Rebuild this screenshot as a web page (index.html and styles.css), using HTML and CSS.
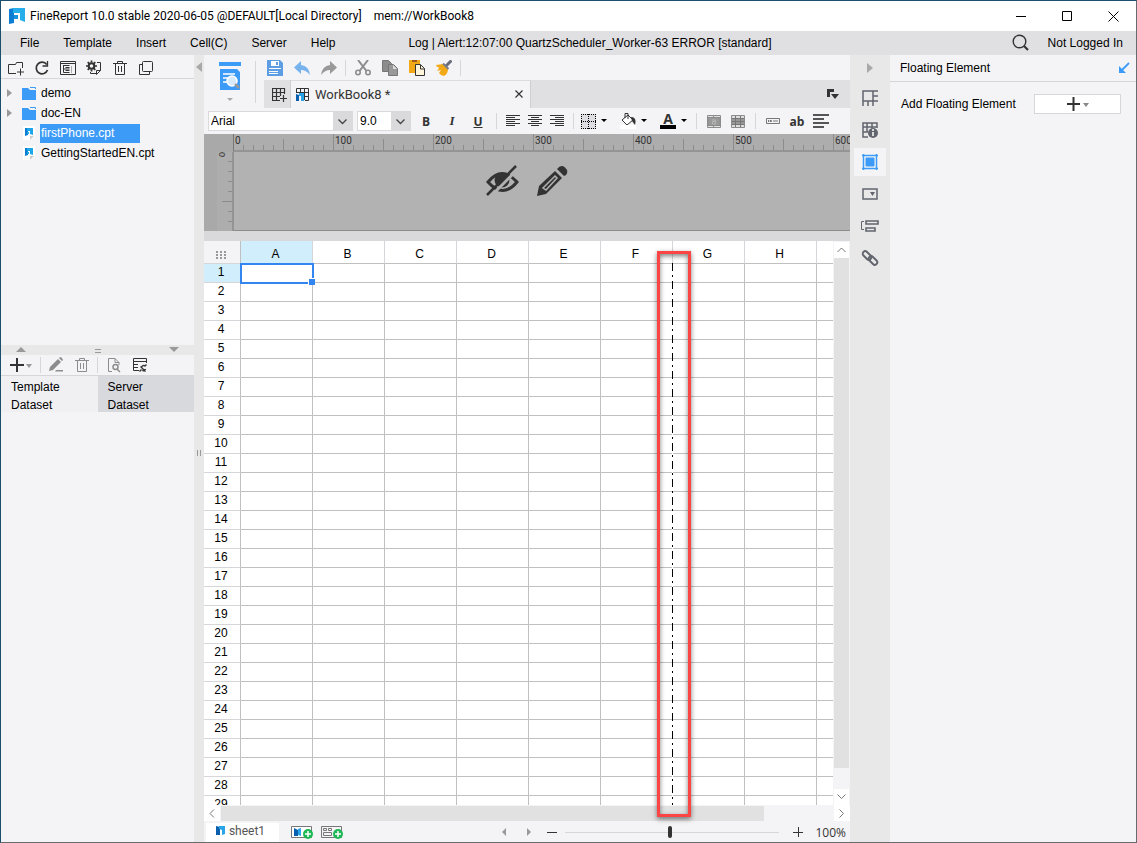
FILE: index.html
```
<!DOCTYPE html>
<html lang="en">
<head>
    <meta charset="UTF-8">
    <meta name="viewport" content="width=device-width, initial-scale=1.0">
    <title>FineReport 10.0</title>
    <link rel="stylesheet" href="styles.css">
</head>
<body>
    <header class="titlebar">
        <svg class="logo" width="16" height="18" viewBox="0 0 16 18">
            <path fill="#0a7ed3" d="M0 2l5-1v15l-5 1z"/>
            <path fill="#25aeea" d="M4 1h12v5H4z"/>
            <path fill="#1593dc" d="M5 8h4v4H5z"/>
            <path fill="#25aeea" d="M11 5h5v10l-5-2z"/>
        </svg>
        <h1>FineReport 10.0 stable 2020-06-05 @DEFAULT[Local Directory]</h1>
        <span class="doc-path">mem://WorkBook8</span>
        <div class="window-buttons">
            <button aria-label="Minimize"><svg width="11" height="11"><path d="M0 5.500h10" stroke="#000"/></svg></button>
            <button aria-label="Maximize"><svg width="11" height="11"><path d="M.5 .5h9v9h-9z" fill="none" stroke="#000"/></svg></button>
            <button aria-label="Close"><svg width="11" height="11"><path d="M.5 .5l10 10M10.500 .5l-10 10" stroke="#000"/></svg></button>
        </div>
    </header>

    <nav class="menubar">
        <button>File</button>
        <button>Template</button>
        <button>Insert</button>
        <button>Cell(C)</button>
        <button>Server</button>
        <button>Help</button>
        <span class="log">Log | Alert:12:07:00 QuartzScheduler_Worker-63 ERROR [standard]</span>
        <button class="search" aria-label="Search"><svg width="18" height="18" fill="none" stroke="#333"><circle cx="7.500" cy="7.500" r="6.300" stroke-width="1.400"/><path d="M12 12l4 4" stroke-width="2.200"/></svg></button>
        <a class="login" href="#">Not Logged In</a>
    </nav>

    <div class="workspace">
        <!-- files and datasets -->
        <aside class="left-panel">
            <div class="file-tools">
                <button aria-label="New folder"><svg width="16" height="16" fill="none" stroke="#333"><path d="M14.500 8V2.500H8.500L7.500 4.500H.5v9H8M12.500 8.500v7M9 12h7"/></svg></button>
                <button aria-label="Refresh"><svg width="16" height="16" fill="none" stroke="#333"><path d="M12.700 4.500A5.800 5.800 0 1 0 13.500 10" stroke-width="1.700"/><path d="M13.500 1v5h-5" stroke-width="1.300"/></svg></button>
                <button aria-label="Show in explorer"><svg width="16" height="16" fill="none" stroke="#333"><path d="M.5 1.500h15v13H.5zM.5 3.500h15M3.500 5v7.500h6M3.500 5.500h6M3.500 9h6M5.500 7.500h4M5.500 10.500h4"/><path d="M11.500 6v7" stroke="#aaa"/></svg></button>
                <button aria-label="Rename"><svg width="16" height="16" fill="none" stroke="#333"><circle cx="5.500" cy="6" r="2.800" stroke-width="2"/><path d="M5.500 .5v2M5.500 9.500v2M0 6h2M9 6h2M1.700 2.200l1.500 1.500M9.300 2.200L7.800 3.700M1.700 9.800l1.500-1.500M9.300 9.800L7.800 8.300" stroke-width="1.700"/><path d="M11 2.500h3.500v8M4.500 12v1.500h6M10.500 10.500h4l-4 4z"/></svg></button>
                <button aria-label="Delete"><svg width="16" height="16" fill="none" stroke="#333"><path d="M1 3.500h14M5.500 3V1.500h5V3M3.500 4v10.500h9V4M6.500 6v6M9.500 6v6"/></svg></button>
                <button aria-label="Copy"><svg width="16" height="16" fill="none" stroke="#333"><rect x="4.500" y="1.500" width="10" height="10" rx="1"/><path d="M4 4.500H1.500v10h10V12"/></svg></button>
            </div>
            <ul class="tree">
                <li><button class="folder"><svg class="twist" width="6" height="10"><path d="M0 1l5 4-5 4z" fill="#999"/></svg><svg width="15" height="13"><path fill="#3d9bf8" d="M0 1h6l2 2h6v10H0z"/><path d="M8 .5h5.500v1.500" fill="none" stroke="#3d9bf8"/></svg><span>demo</span></button></li>
                <li><button class="folder"><svg class="twist" width="6" height="10"><path d="M0 1l5 4-5 4z" fill="#999"/></svg><svg width="15" height="13"><path fill="#3d9bf8" d="M0 1h6l2 2h6v10H0z"/><path d="M8 .5h5.500v1.500" fill="none" stroke="#3d9bf8"/></svg><span>doc-EN</span></button></li>
                <li><button class="file selected"><svg width="15" height="14"><path fill="#fff" d="M1 0h12v10l-4 4H1z"/><path d="M8 14v-4h4z" fill="#ccc"/><path fill="#0a7ed3" d="M3 2h3v7l-3 1z"/><path fill="#1fa6e8" d="M5 2h6v3H5zM8 4h3v5l-3-1zM5 6h2v2H5z"/></svg><span>firstPhone.cpt</span></button></li>
                <li><button class="file"><svg width="15" height="14"><path fill="#fff" d="M1 0h12v10l-4 4H1z"/><path d="M8 14v-4h4z" fill="#ccc"/><path fill="#0a7ed3" d="M3 2h3v7l-3 1z"/><path fill="#1fa6e8" d="M5 2h6v3H5zM8 4h3v5l-3-1zM5 6h2v2H5z"/></svg><span>GettingStartedEN.cpt</span></button></li>
            </ul>
            <div class="h-splitter">
                <svg width="10" height="6"><path d="M0 5h10L5 0z" fill="#999"/></svg>
                <svg width="6" height="5"><path d="M0 1.500h6M0 4.500h6" stroke="#999"/></svg>
                <svg width="10" height="6"><path d="M0 0h10L5 5z" fill="#999"/></svg>
            </div>
            <div class="data-tools">
                <button class="add" aria-label="Add dataset"><svg width="22" height="14"><path d="M0 7h14M7 0v14" stroke="#333" stroke-width="2"/><path d="M16 6h6l-3 4z" fill="#999"/></svg></button>
                <i class="sep"></i>
                <button aria-label="Edit"><svg width="16" height="16"><path fill="#8c8c8c" d="M1 14l1-4 8-8 3 3-8 8zM11 1l1-1q2 0 3 3l-1 1zM8 13h7v1.500H7z"/></svg></button>
                <button aria-label="Remove"><svg width="16" height="16" fill="none" stroke="#8c8c8c"><path d="M1 3.500h14M5.500 3V1.500h5V3M3.500 4v10.500h9V4M6.500 6v6M9.500 6v6"/></svg></button>
                <i class="sep"></i>
                <button aria-label="Preview"><svg width="16" height="16" fill="none" stroke="#8c8c8c"><path d="M6 14.500H2.500v-13H9l4 4V8M9 1.500v4h4"/><circle cx="9.500" cy="10" r="2.500" stroke-width="1.500"/><path d="M11 12l3 3" stroke-width="1.500"/></svg></button>
                <button aria-label="Connection"><svg width="16" height="16" fill="none" stroke="#333"><path d="M14.500 6V1.500h-13v12H7M1 4.500h14M2 7.500h4M2 10.500h4"/><path d="M7.500 14.500l2-2M12.500 9.500l2-2M8.500 9.500l5 5M9.500 10.500q1-3 4-1.500M10 13.500q3 1 3.500-1.500" stroke-width="1.300"/></svg></button>
            </div>
            <div class="data-tabs">
                <button>Template Dataset</button>
                <button class="active">Server Dataset</button>
            </div>
        </aside>
        <div class="v-splitter">
            <svg width="6" height="10"><path d="M6 0v10L0 5z" fill="#a8a8a8"/></svg>
            <svg class="grip" width="4" height="6"><path d="M.5 0v6M3.500 0v6" stroke="#999"/></svg>
        </div>

        <!-- report designer -->
        <main class="designer">
            <div class="top-tools">
                <button class="preview" aria-label="Preview">
                    <svg width="22" height="40"><path fill="#3d9bf8" d="M0 0h22v4H0zM1 7h17l3 3v18H1z"/><path d="M4 12h12M4 16h6M4 20h4" stroke="#fff" stroke-width="1.500"/><circle cx="13" cy="19" r="5" fill="#d8ebfc" stroke="#fff" stroke-width="1.500"/><path d="M16 22l4 4" stroke="#999" stroke-width="2.500"/><path d="M8 36h6l-3 3z" fill="#aaa"/></svg>
                </button>
                <i class="sep tall"></i>
                <div class="top-rows">
                    <div class="quick-tools">
                        <button aria-label="Save"><svg width="16" height="16"><path fill="#5c9de3" d="M0 0h13l3 3v13H0z"/><path fill="#fff" d="M4 1h8v5H4zM2 8h12v1H2zM2 11h9v1H2zM2 13h9v1H2z"/><path fill="#5c9de3" d="M9 2h2v3H9z"/></svg></button>
                        <button aria-label="Undo"><svg width="16" height="16"><path fill="#79b3ee" d="M7 1v4q8 1 9 10-4-5-9-5v4L0 7.500z"/></svg></button>
                        <button aria-label="Redo"><svg width="16" height="16"><path fill="#999" d="M9 1v4Q1 6 0 15q4-5 9-5v4l7-6.500z"/></svg></button>
                        <i class="sep"></i>
                        <button aria-label="Cut"><svg width="16" height="16" fill="none" stroke="#8c8c8c"><circle cx="3" cy="12.500" r="2.200" stroke-width="1.600"/><circle cx="13" cy="12.500" r="2.200" stroke-width="1.600"/><path d="M3 0l8.500 11M13 0L4.500 11" stroke-width="2"/></svg></button>
                        <button aria-label="Copy"><svg width="16" height="16"><path fill="#8c8c8c" stroke="#777" d="M.5 .5h6l3 3v8h-9z"/><path fill="#999" stroke="#777" d="M6.500 4.500h5l4 4v7h-9z"/><path fill="#ddd" d="M11 5l4 4h-4z"/></svg></button>
                        <button aria-label="Paste"><svg width="16" height="16"><path fill="#f3a916" d="M0 0h11v13H0z"/><path fill="#9b5c1d" d="M3 0h5v2H3z"/><path fill="#fff6dc" stroke="#333" d="M6.500 4.500h5l4 4v7h-9z"/><path fill="none" stroke="#333" d="M11.500 5v4h4"/></svg></button>
                        <button aria-label="Format brush"><svg width="16" height="16"><path fill="#f3a916" d="M0 5l7-1 5 5q0 5-4 7-3 0-5-3l2-3-4 1q2-2 2-4-2 1-3-2z"/><path d="M10 6l5.500-5.500" stroke="#666c7a" stroke-width="3"/><path d="M7 3.500L12.500 9" stroke="#777d88" stroke-width="2"/></svg></button>
                        <i class="sep"></i>
                    </div>
                    <div class="doc-tabs">
                        <button class="new-tab" aria-label="New workbook"><svg width="15" height="15" fill="none" stroke="#333"><path d="M8 13.500H.5v-12h12V7M.5 5.500h12M.5 9.500H8M4.500 1v12M8.500 1v8M11.500 8v7M8 11.500h7" stroke-width="1.200"/></svg></button>
                        <div class="doc-tab">
                            <svg width="14" height="15" fill="none" stroke="#333"><path d="M.5 5V1.500h12v12H9M0 5.500h13M9 9.500h4M4.500 1v4M8.500 1v12"/><path fill="#0a5fae" stroke="none" d="M0 7l3 1v6H0z"/><path fill="#2aa4e8" stroke="none" d="M3 6h5v8H5V9H3z"/></svg>
                            <span>WorkBook8 *</span>
                            <button aria-label="Close tab"><svg width="9" height="9"><path d="M.5 .5l7 7M7.500 .5l-7 7" stroke="#333" stroke-width="1.200"/></svg></button>
                        </div>
                        <button class="tab-menu" aria-label="Tab list"><svg width="13" height="11"><path fill="#333" d="M0 0h7v3H3v5H0zM4 5h8l-4 5z"/></svg></button>
                    </div>
                </div>
            </div>

            <div class="format-tools">
                <label class="combo font"><select aria-label="Font"><option>Arial</option></select><svg width="9" height="6"><path d="M.5 .5l4 4 4-4" fill="none" stroke="#444" stroke-width="1.300"/></svg></label>
                <label class="combo size"><select aria-label="Font size"><option>9.0</option></select><svg width="9" height="6"><path d="M.5 .5l4 4 4-4" fill="none" stroke="#444" stroke-width="1.300"/></svg></label>
                <button class="style"><b>B</b></button>
                <button class="style italic"><b><i>I</i></b></button>
                <button class="style"><b><u>U</u></b></button>
                <i class="sep"></i>
                <button class="align" aria-label="Align left"><svg width="14" height="12" stroke="#333"><path d="M0 .5h14M0 2.500h9M0 4.500h14M0 6.500h9M0 8.500h14M0 10.500h9"/></svg></button>
                <button class="align" aria-label="Align center"><svg width="14" height="12" stroke="#333"><path d="M0 .5h14M3 2.500h8M0 4.500h14M3 6.500h8M0 8.500h14M3 10.500h8"/></svg></button>
                <button class="align" aria-label="Align right"><svg width="14" height="12" stroke="#333"><path d="M0 .5h14M5 2.500h9M0 4.500h14M5 6.500h9M0 8.500h14M5 10.500h9"/></svg></button>
                <i class="sep"></i>
                <div class="split">
                    <button aria-label="Border"><svg width="15" height="15"><path fill="#dedee2" d="M0 0h15v15H0z"/><path d="M0 .5h15M0 7.500h15M0 14.500h15M.5 0v15M7.500 0v15M14.500 0v15" stroke="#000" stroke-dasharray="1 1"/></svg></button>
                    <button aria-label="Border options"><svg width="6" height="4"><path d="M0 0h6L3 3z"/></svg></button>
                </div>
                <div class="split">
                    <button aria-label="Fill"><svg width="16" height="16"><path d="M2 7l6-5 5 5-6 5z" fill="#fff" stroke="#333"/><path d="M5 5V.5h3V6" fill="none" stroke="#333"/><path d="M11 4q6 0 4 8l-3-4z" fill="#333"/><path fill="#fff" d="M0 12h16v4H0z"/></svg></button>
                    <button aria-label="Fill options"><svg width="6" height="4"><path d="M0 0h6L3 3z"/></svg></button>
                </div>
                <div class="split">
                    <button class="color" aria-label="Text color"><b>A</b></button>
                    <button aria-label="Text color options"><svg width="6" height="4"><path d="M0 0h6L3 3z"/></svg></button>
                </div>
                <i class="sep"></i>
                <button class="cell" aria-label="Merge cells"><svg width="14" height="13"><path fill="#e0e0e0" stroke="#8c8c8c" d="M.5 .5h13v12H.5zM6.500 .5v12"/><path fill="#999" stroke="#8c8c8c" d="M1 2.500h12v8H1z"/><path d="M5 5h3.500v4H5.500V6.500h3" fill="none" stroke="#b5b5b5"/></svg></button>
                <button class="cell" aria-label="Unmerge cells"><svg width="14" height="13"><path fill="#ddd" stroke="#8c8c8c" d="M.5 .5h13v12H.5z"/><path fill="#999" d="M1 3h12v7H1z"/><path d="M1 3.500h12M1 6.500h12M1 9.500h12M4.500 1v11M9.500 1v11" stroke="#777"/></svg></button>
                <i class="sep"></i>
                <button class="cell" aria-label="Cell element"><svg width="14" height="6" fill="none" stroke="#777"><path d="M.5 .5h13v5H.5zM2.500 2v2M4 2.500h1.500v1H4zM7 3h5"/></svg></button>
                <button class="cell"><b>ab</b></button>
                <button class="cell" aria-label="Line spacing"><svg width="16" height="14"><path d="M0 1h16M0 5h11M0 9h16M0 13h11" stroke="#555" stroke-width="2"/></svg></button>
            </div>

            <section class="parameter-pane">
                <div class="ruler">
                    <span>0</span><span>100</span><span>200</span><span>300</span><span>400</span><span>500</span><span>600</span>
                </div>
                <div class="pane-row">
                    <div class="side-ruler"><span>0</span></div>
                    <div class="pane-body">
                        <button aria-label="Hide parameter pane"><svg width="34" height="32"><path d="M2 17q14-17 29 0-14 17-29 0z" fill="none" stroke="#333" stroke-width="3"/><circle cx="16" cy="15" r="7.500" fill="#333"/><path d="M4 32L32 4" stroke="#b2b2b2" stroke-width="3"/><path d="M1 30L30 1" stroke="#333" stroke-width="2.500"/></svg></button>
                        <button aria-label="Edit parameter pane"><svg width="32" height="32"><path d="M1 31l2-10L19 6l7 7-16 16z" fill="#333"/><path d="M21 4q4-5 8-1.500t1 7.500l-2 1-7-7z" fill="#333"/><path d="M7 23L19 11l2 2L10 25z" fill="none" stroke="#b2b2b2" stroke-width="1.500"/></svg></button>
                    </div>
                </div>
            </section>

            <section class="sheet">
                <div class="sheet-view">
                    <div class="grid-clip">
                        <table class="grid">
                            <thead>
                                <tr>
                                    <th class="corner"><svg width="11" height="8" stroke="#999" stroke-width="2"><path d="M0 1h11M0 4h11M0 7h11" stroke-dasharray="2 2"/></svg></th>
                                    <th class="current">A</th><th>B</th><th>C</th><th>D</th><th>E</th><th>F</th><th>G</th><th>H</th><th class="rest"></th>
                                </tr>
                            </thead>
                            <tbody id="rows"></tbody>
                        </table>
                        <div class="cell-cursor"></div>
                    </div>
                    <div class="v-scroll">
                        <button aria-label="Scroll up"><svg width="9" height="6"><path d="M.5 5l4-4 4 4" fill="none" stroke="#777"/></svg></button>
                        <div class="thumb"></div>
                        <button aria-label="Scroll down"><svg width="9" height="6"><path d="M.5 .5l4 4 4-4" fill="none" stroke="#777"/></svg></button>
                    </div>
                </div>
                <div class="h-scroll">
                    <button aria-label="Scroll left"><svg width="6" height="9"><path d="M5 .5l-4 4 4 4" fill="none" stroke="#777"/></svg></button>
                    <div class="thumb"></div>
                    <button aria-label="Scroll right"><svg width="6" height="9"><path d="M.5 .5l4 4-4 4" fill="none" stroke="#777"/></svg></button>
                </div>
                <div class="page-break"></div>
                <div class="highlight"></div>
            </section>

            <footer class="sheet-bar">
                <button class="sheet-tab"><svg width="9" height="9"><path fill="#0a5fae" d="M0 0l4 1v8H0z"/><path fill="#2aa4e8" d="M3 0h6v8l-3 1V4L3 3z"/></svg>sheet1</button>
                <button class="add-sheet" aria-label="Add sheet"><svg width="22" height="13"><path d="M.5 .5h20v11H.5z" fill="#fff" stroke="#777"/><path fill="#0a5fae" d="M3 2l4 2v6H3z"/><path fill="#2aa4e8" d="M7 3l3-1v8l-3-1z"/><circle cx="17" cy="8" r="5" fill="#1db954"/><path d="M14 8h6M17 5v6" stroke="#fff" stroke-width="1.500"/></svg></button>
                <button class="add-sheet" aria-label="Add form"><svg width="22" height="13"><path d="M.5 .5h20v11H.5zM2.500 2.500h3v2h-3zM7.500 2.500h3v2h-3zM2.500 6.500h8v3h-8z" fill="none" stroke="#777"/><circle cx="17" cy="8" r="5" fill="#1db954"/><path d="M14 8h6M17 5v6" stroke="#fff" stroke-width="1.500"/></svg></button>
                <div class="zoom">
                    <button aria-label="Previous sheet"><svg width="5" height="8"><path d="M4 0v8L0 4z" fill="#999"/></svg></button>
                    <button aria-label="Next sheet"><svg width="5" height="8"><path d="M1 0v8l4-4z" fill="#999"/></svg></button>
                    <button aria-label="Zoom out"><svg width="10" height="10"><path d="M0 5.500h10" stroke="#333"/></svg></button>
                    <input type="range" min="0" max="100" value="49" aria-label="Zoom">
                    <button aria-label="Zoom in"><svg width="10" height="10"><path d="M0 5.500h10M5.500 0v10" stroke="#333"/></svg></button>
                    <span>100%</span>
                </div>
            </footer>
        </main>

        <!-- property panels -->
        <nav class="side-tabs">
            <button class="collapse" aria-label="Collapse"><svg width="6" height="10"><path d="M0 0l6 5-6 5z" fill="#a8a8a8"/></svg></button>
            <button aria-label="Cell element"><svg width="18" height="18" fill="none" stroke="#62646e" stroke-width="1.500"><path d="M17 2H2v15M2 12h15M12 2v15M7 12v5M12 7h5"/></svg></button>
            <button aria-label="Cell attributes"><svg width="18" height="18" fill="none" stroke="#62646e" stroke-width="1.500"><path d="M7 16H2V2h14v5M2 6h14M2 11h5M6 2v9M11 2v5"/><circle cx="12" cy="12" r="5" fill="#62646e" stroke="none"/><path d="M12 11v4M12 8v2" stroke="#fff"/></svg></button>
            <button class="active" aria-label="Floating element"><svg width="18" height="18" fill="none" stroke="#3d9bf8"><path d="M1 2.500h16M1 15.500h16M2.500 1v16M15.500 1v16" stroke-width="1.500"/><path d="M5 5h8v8H5z" fill="#3d9bf8"/></svg></button>
            <button aria-label="Widget"><svg width="18" height="18" fill="none" stroke="#62646e"><path d="M2 4h14v10H2z" stroke-width="1.500"/><path d="M9 7h5l-2.500 4z" fill="#62646e" stroke="none"/></svg></button>
            <button aria-label="Conditions"><svg width="20" height="18" fill="none" stroke="#62646e"><path d="M4 4.500H1.500v8H4"/><path d="M6 4h12v3H6zM6 11h9v3H6z" stroke-width="1.600"/></svg></button>
            <button aria-label="Hyperlink"><svg width="18" height="18" fill="none" stroke="#62646e" stroke-width="1.900"><rect x="1" y="4" width="10" height="5" rx="2.500" transform="rotate(45 6 6.500)"/><rect x="7" y="9" width="10" height="5" rx="2.500" transform="rotate(45 12 11.500)"/></svg></button>
        </nav>
        <aside class="right-panel">
            <h2>Floating Element<button aria-label="Detach"><svg width="12" height="12"><path d="M11 1L3 9" stroke="#3d9bf8" stroke-width="1.800"/><path d="M1 4v7h7z" fill="#3d9bf8"/></svg></button></h2>
            <div class="field">
                <label for="addFloating">Add Floating Element</label>
                <button id="addFloating"><svg width="22" height="14"><path d="M0 7h13M6.500 0v14" stroke="#333" stroke-width="2"/><path d="M16 6h6l-3 4z" fill="#888"/></svg></button>
            </div>
        </aside>
    </div>

    <script>
        const rows = document.getElementById('rows');

        for (let i = 1; i <= 29; i++) {
            const row = document.createElement('tr');
            const head = document.createElement('th');
            head.textContent = i;
            if (i === 1) {
                head.className = 'current';
            }
            row.appendChild(head);
            for (let c = 0; c < 9; c++) {
                row.appendChild(document.createElement('td'));
            }
            rows.appendChild(row);
        }
    </script>
</body>
</html>
```
FILE: styles.css
```
* {
    box-sizing: border-box;
}

body {
    display: flex;
    flex-direction: column;
    height: 100vh;
    margin: 0;
    border: 1px solid #6a6a6e;
    border-top-color: #1b4f6e;
    border-left-color: #1b4f6e;
    background-color: #f4f4f6;
    color: #000;
    font-family: "Liberation Sans", Arial, sans-serif;
    font-size: 12px;
    overflow: hidden;
}

button {
    display: flex;
    align-items: center;
    justify-content: center;
    flex-shrink: 0;
    padding: 0;
    border: none;
    background: none;
    color: inherit;
    font: inherit;
}

svg {
    display: block;
    flex-shrink: 0;
}

.sep {
    flex-shrink: 0;
    width: 1px;
    height: 16px;
    background-color: #d6d6da;
}

/* title and menu */
.titlebar {
    display: flex;
    flex-shrink: 0;
    align-items: center;
    height: 30px;
    padding-left: 8px;
    background-color: #fff;
    font-family: Roboto, sans-serif;
    white-space: nowrap;
}

.titlebar h1 {
    margin: 0 12px 0 5px;
    font-size: 12px;
    font-weight: normal;
}

.window-buttons {
    display: flex;
    margin-left: auto;
}

.window-buttons button {
    width: 46px;
    height: 30px;
}

.menubar {
    display: flex;
    flex-shrink: 0;
    align-items: center;
    height: 24px;
    padding: 0 13px 0 7px;
    background-color: #e0e0e3;
    white-space: nowrap;
}

.menubar button {
    height: 24px;
    padding: 0 12px;
}

.log {
    margin-left: 61px;
}

.menubar .search {
    margin-left: auto;
    padding: 0 18px;
}

.login {
    color: #000;
    text-decoration: none;
}

.workspace {
    display: flex;
    flex: 1;
    min-height: 0;
}

/* left side */
.left-panel {
    display: flex;
    flex-direction: column;
    flex-shrink: 0;
    width: 193px;
}

.file-tools {
    display: flex;
    height: 24px;
    padding-left: 2px;
    border-bottom: 1px solid #d6d6da;
}

.file-tools button {
    width: 26px;
    padding-top: 3px;
}

.tree {
    flex: 0 1 266px;
    margin: 0;
    padding: 4px 0 0 6px;
    list-style-type: none;
}

.tree button {
    height: 20px;
}

.tree .twist {
    margin-right: 9px;
}

.tree .file {
    padding-left: 15px;
}

.tree span {
    height: 19px;
    margin-left: 3px;
    padding: 0 1px;
    line-height: 19px;
}

.tree .selected span {
    width: 100px;
    background-color: #3d9bf8;
    color: #fff;
    text-align: left;
}

.h-splitter {
    display: flex;
    align-items: center;
    justify-content: space-between;
    height: 10px;
    padding: 0 15px;
    background-color: #e8e8e8;
}

.data-tools {
    display: flex;
    align-items: center;
    height: 21px;
    border-bottom: 1px solid #d6d6da;
}

.data-tools button {
    width: 26px;
}

.data-tools .add {
    width: 39px;
}

.data-tools .sep {
    margin-right: 3px;
}

.data-tools button + .sep {
    margin-left: 2px;
}

.data-tools .add + .sep {
    margin: 0 2px 0 0;
}

.data-tabs {
    display: flex;
}

.data-tabs button {
    flex: 1;
    justify-content: flex-start;
    height: 36px;
    padding: 3px 30px 0 10px;
    background-color: #f0f0f3;
    line-height: 18px;
    text-align: left;
}

.data-tabs .active {
    background-color: #d8d9dd;
}

.v-splitter {
    display: flex;
    flex-direction: column;
    flex-shrink: 0;
    align-items: center;
    width: 10px;
    padding-top: 7px;
    background-color: #e8e8e8;
}

.v-splitter .grip {
    margin-top: 378px;
}

/* designer toolbars */
.designer {
    display: flex;
    flex: 1;
    flex-direction: column;
    min-width: 0;
}

.top-tools {
    display: flex;
    flex-shrink: 0;
}

.preview {
    width: 51px;
}

.sep.tall {
    height: 42px;
    margin-top: 6px;
}

.top-rows {
    flex: 1;
}

.quick-tools {
    display: flex;
    align-items: center;
    height: 25px;
    padding-left: 5px;
}

.quick-tools button {
    width: 27px;
}

.quick-tools .sep {
    margin: 0 3px;
}

.doc-tabs {
    display: flex;
    height: 28px;
    margin-left: 8px;
    background-color: #e0e0e2;
}

.new-tab {
    width: 27px;
    padding-left: 4px;
    border-right: 1px solid #cfcfd3;
}

.doc-tab {
    display: flex;
    align-items: center;
    width: 240px;
    padding: 0 6px 0 5px;
    border-top: 1px solid #dcdce0;
    border-right: 1px solid #cfcfd3;
    background-color: #f4f4f6;
    color: #333;
    font-family: Roboto, sans-serif;
    font-size: 13px;
}

.doc-tab span {
    margin-left: 5px;
}

.doc-tab button {
    margin-left: auto;
}

.tab-menu {
    margin: 0 10px 0 auto;
}

.format-tools {
    display: flex;
    flex-shrink: 0;
    align-items: center;
    height: 26px;
    padding-left: 4px;
}

.format-tools .sep {
    margin: 0 5px;
}

.combo {
    position: relative;
    margin-right: 4px;
}

.combo select {
    display: block;
    width: 100%;
    height: 20px;
    padding: 0 24px 0 2px;
    border: 1px solid #dadadd;
    border-radius: 0;
    appearance: none;
    background: linear-gradient(to left, #dadadd 19px, #fff 19px);
    color: #000;
    font: inherit;
}

.combo svg {
    position: absolute;
    top: 8px;
    right: 6px;
    pointer-events: none;
}

.combo.font {
    width: 145px;
}

.combo.size {
    width: 54px;
    margin-right: 2px;
}

.format-tools b {
    color: #333;
    font-family: "Open Sans", sans-serif;
}

.style {
    width: 26px;
}

.italic b {
    font-family: "Liberation Serif", serif;
    font-size: 13px;
}

.align {
    width: 22px;
}

.cell {
    width: 24px;
}

.split {
    display: flex;
    align-items: center;
}

.split + .split {
    margin-left: 8px;
}

.split button {
    width: 18px;
    height: 18px;
}

.split button:last-child {
    width: 14px;
}

.split .color {
    width: 16px;
    height: 16px;
    margin: 0 1px;
    border-bottom: 4px solid #000;
    font-size: 14px;
    line-height: 12px;
}

/* parameter pane */
.parameter-pane {
    flex-shrink: 0;
    background-color: #a9a9a9;
}

.ruler {
    display: flex;
    height: 18px;
    margin-left: 29px;
    border-bottom: 2px solid #949494;
    border-left: 1px solid #777;
    background-color: #adadad;
    background-image:
        repeating-linear-gradient(to right, transparent 0 99px, #8c8c8c 99px 100px),
        repeating-linear-gradient(to right, transparent 0 49px, #8c8c8c 49px 50px),
        repeating-linear-gradient(to right, transparent 0 9px, #8c8c8c 9px 10px);
    background-position: 0 0, 0 5px, 0 11px;
    background-repeat: no-repeat;
    background-size: 100% 16px, 100% 11px, 100% 5px;
    overflow: hidden;
}

.ruler span {
    flex: 0 0 100px;
    padding: 1px 0 0 1px;
    color: #333;
    font-family: Roboto, sans-serif;
    font-size: 10px;
    line-height: 12px;
}

.ruler span:last-child {
    flex: 1 1 0;
    min-width: 0;
}

.pane-row {
    display: flex;
    height: 79px;
}

.side-ruler {
    width: 17px;
    margin-left: 13px;
    border-right: 2px solid #949494;
    background-color: #adadad;
    background-image:
        repeating-linear-gradient(to bottom, transparent 0 49px, #8c8c8c 49px 50px),
        repeating-linear-gradient(to bottom, transparent 0 9px, #8c8c8c 9px 10px);
    background-position: 5px 0, 11px 0;
    background-repeat: no-repeat;
    background-size: 10px 100%, 5px 100%;
}

.side-ruler span {
    display: block;
    color: #333;
    font-size: 9px;
    line-height: 10px;
    writing-mode: vertical-rl;
}

.pane-body {
    display: flex;
    flex: 1;
    align-items: flex-start;
    justify-content: center;
    gap: 16px;
    padding-top: 13px;
    padding-right: 30px;
    border-bottom: 1px solid #8c8c8c;
    background-color: #b2b2b2;
}

/* sheet */
.sheet {
    position: relative;
    display: flex;
    flex: 1;
    flex-direction: column;
    min-height: 0;
    border-top: 10px solid #d9d9db;
}

.sheet-view {
    display: flex;
    flex: 1;
    min-height: 0;
}

.grid-clip {
    position: relative;
    flex: 1;
    background-color: #fff;
    overflow: hidden;
}

.grid {
    width: 100%;
    border-spacing: 0;
    table-layout: fixed;
}

.grid th,
.grid td {
    width: 72px;
    height: 19px;
    padding: 0;
    border: solid #c0c0c0;
    border-width: 0 1px 1px 0;
    font-weight: normal;
    line-height: 18px;
}

.grid thead th {
    height: 23px;
    padding: 3px 2px 0 0;
    border-right-color: #d6d6da;
}

.grid tr th:first-child {
    width: 37px;
    border-color: #d6d6da;
    border-right-color: #c0c0c0;
}

.grid tbody th {
    padding: 0 2px 2px 0;
    line-height: 16px;
}

.grid .corner {
    background-color: #f4f4f6;
}

.corner svg {
    margin: 3px auto 0;
}

.grid .current {
    background-color: #d0eefb;
}

.grid thead .rest {
    width: auto;
}

.grid tr > :last-child {
    border-right: none;
}

.cell-cursor {
    position: absolute;
    top: 22px;
    left: 36px;
    width: 74px;
    height: 21px;
    border: 2px solid #3385f0;
}

.cell-cursor::after {
    position: absolute;
    right: -3px;
    bottom: -3px;
    width: 6px;
    height: 6px;
    border: solid #fff;
    border-width: 1px 0 0 1px;
    background-color: #3385f0;
    content: "";
}

.v-scroll {
    display: flex;
    flex-direction: column;
    width: 17px;
    padding: 1px 1px 0 1px;
}

.v-scroll button {
    height: 16px;
    background-color: #fff;
}

.v-scroll .thumb {
    flex: 1;
    margin-bottom: 21px;
    background-color: #e1e1e1;
}

.h-scroll {
    display: flex;
    flex-shrink: 0;
    height: 17px;
    padding-bottom: 1px;
}

.h-scroll button {
    width: 16px;
    background-color: #fff;
}

.h-scroll .thumb {
    flex: 1;
    margin: 1px 70px 0 1px;
    background-color: #e1e1e1;
}

.page-break {
    position: absolute;
    top: 22px;
    bottom: 17px;
    left: 468px;
    width: 1px;
    background: repeating-linear-gradient(to bottom, #000 0 8px, #fff 8px 12px, #000 12px 14px, #fff 14px 18px);
}

.highlight {
    position: absolute;
    top: 10px;
    bottom: 5px;
    left: 453px;
    width: 34px;
    border: 3px solid #fb4545;
    box-shadow: 0 2px 5px rgba(0, 0, 0, 0.5), inset 0 2px 5px rgba(0, 0, 0, 0.5);
}

.sheet-bar {
    display: flex;
    flex-shrink: 0;
    align-items: center;
    height: 20px;
}

.sheet-tab {
    gap: 4px;
    width: 73px;
    height: 19px;
    margin: 0 12px 0 2px;
    padding-right: 4px;
    padding-bottom: 3px;
    background-color: #fff;
    color: #555;
    font-family: Roboto, sans-serif;
    font-size: 12px;
}

.add-sheet {
    margin-right: 8px;
}

.zoom {
    display: flex;
    align-items: center;
    margin-left: auto;
    padding-right: 4px;
}

.zoom button {
    width: 24px;
}

.zoom input {
    width: 214px;
    height: 12px;
    margin: 0 7px 0 1px;
    appearance: none;
    background: linear-gradient(#d6d6da, #d6d6da) center / 100% 1px no-repeat;
}

.zoom input::-webkit-slider-thumb {
    width: 4px;
    height: 12px;
    border-radius: 2px;
    appearance: none;
    background-color: #333;
}

.zoom span {
    margin-left: 5px;
    color: #333;
    font-family: "Open Sans", sans-serif;
}

/* right side */
.side-tabs {
    display: flex;
    flex-direction: column;
    flex-shrink: 0;
    align-items: center;
    gap: 4px;
    width: 40px;
    background-color: #e8e8e8;
}

.side-tabs button {
    width: 32px;
    height: 28px;
}

.side-tabs .collapse {
    height: 25px;
}

.side-tabs .active {
    background-color: #f4f4f6;
}

.right-panel {
    flex-shrink: 0;
    width: 246px;
}

.right-panel h2 {
    display: flex;
    align-items: center;
    justify-content: space-between;
    height: 27px;
    margin: 0;
    padding: 0 6px 0 10px;
    border-bottom: 1px solid #d6d6da;
    font-size: 12px;
    font-weight: normal;
}

.field {
    display: flex;
    align-items: center;
    justify-content: space-between;
    padding: 12px 15px 12px 11px;
}

.field button {
    width: 87px;
    height: 20px;
    border: 1px solid #d6d6da;
    background-color: #fff;
}
```
